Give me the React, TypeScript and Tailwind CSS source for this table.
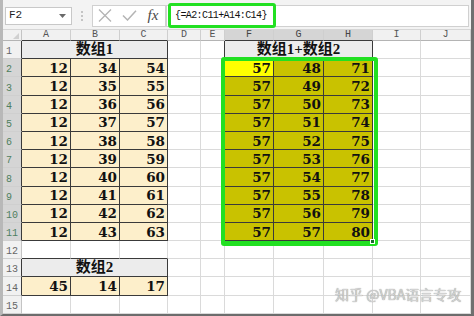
import React from 'react'

type Kind = 'empty' | 'title' | 'peach' | 'olive' | 'active'

const COLS = ['A', 'B', 'C', 'D', 'E', 'F', 'G', 'H', 'I', 'J']
const ROWS = Array.from({ length: 15 }, (_, i) => i + 1)

// merged cells: row -> start columns (each spans 3)
const merges: Record<number, number[]> = { 1: [0, 5], 13: [0] }

const inBlock = (r: number, c: number) =>
  (c >= 0 && c <= 2 && ((r >= 1 && r <= 11) || r === 13 || r === 14)) ||
  (c >= 5 && c <= 7 && r >= 1 && r <= 11)

function content(r: number, c: number): { kind: Kind; text?: string } {
  if (r === 1 && c === 0) return { kind: 'title', text: '数组1' }
  if (r === 1 && c === 5) return { kind: 'title', text: '数组1+数组2' }
  if (r === 13 && c === 0) return { kind: 'title', text: '数组2' }
  if (r >= 2 && r <= 11 && c <= 2) {
    const i = r - 2
    return { kind: 'peach', text: String([12, 34 + i, 54 + i][c]) }
  }
  if (r === 14 && c <= 2) return { kind: 'peach', text: String([45, 14, 17][c]) }
  if (r >= 2 && r <= 11 && c >= 5 && c <= 7) {
    const i = r - 2
    return { kind: r === 2 && c === 5 ? 'active' : 'olive', text: String([57, 48 + i, 71 + i][c - 5]) }
  }
  return { kind: 'empty' }
}

const kindClass: Record<Kind, string> = {
  empty: 'bg-white',
  title: "bg-[#ececec] justify-center font-bold text-[15px] text-[#111] font-['Liberation_Serif','Noto_Sans_CJK_SC',serif]",
  peach: "bg-[#fdefcb] justify-end items-end pr-[2px] pb-[1px] font-bold text-[13.5px] text-[#111] font-['DejaVu_Serif',serif]",
  olive: "bg-[#c9c200] justify-end items-end pr-[2px] pb-[1px] font-bold text-[13.5px] text-[#111] font-['DejaVu_Serif',serif]",
  active: "bg-[#ffff00] justify-end items-end pr-[2px] pb-[1px] font-bold text-[13.5px] text-[#111] font-['DejaVu_Serif',serif]",
}

function SheetRow({ r }: { r: number }) {
  const cells: React.ReactNode[] = []
  const rowSel = r >= 2 && r <= 11
  cells.push(
    <div
      key="h"
      className={
        'flex items-end pl-[3px] pb-[1px] border-b border-b-[#cfcfcf] border-r leading-none text-[10px] font-[\'Liberation_Mono\',monospace] ' +
        (inBlock(r, 0) ? 'border-r-[#3a3a3a] ' : 'border-r-[#c4c4c4] ') +
        (rowSel ? 'bg-[#d5d5d5] text-[#4f8060]' : 'bg-[#f1f1f1] text-[#666]')
      }
    >
      {r}
    </div>
  )
  let c = 0
  while (c < COLS.length) {
    const span = (merges[r] || []).includes(c) ? 3 : 1
    const last = c + span - 1
    const rDark = inBlock(r, last) || inBlock(r, last + 1)
    const bDark = inBlock(r, c) || inBlock(r + 1, c)
    const { kind, text } = content(r, c)
    cells.push(
      <div
        key={c}
        className={
          'flex items-center leading-none overflow-hidden border-r border-b ' +
          (span === 3 ? 'col-span-3 ' : '') +
          (rDark ? 'border-r-[#3a3a3a] ' : 'border-r-[#dadada] ') +
          (bDark ? 'border-b-[#3a3a3a] ' : 'border-b-[#dadada] ') +
          kindClass[kind]
        }
      >
        {text}
      </div>
    )
    c += span
  }
  return <>{cells}</>
}

export default function App() {
  return (
    <div className="relative w-[474px] h-[316px] overflow-hidden bg-white">
      <div className="w-full h-full flex flex-col border-l-[3px] border-l-[#b8b8b8] border-r-[3px] border-r-[#707070] border-b-[2px] border-b-[#6c6c6c]">
        {/* formula bar */}
        <div className="h-[30px] flex items-center pt-[2px] bg-[#f3f3f3] border-b border-b-[#d6d6d6]">
          <div className="ml-[2px] w-[67px] h-[18px] bg-white border border-[#c8c8c8] flex items-center justify-between pl-[3px] pr-[5px]">
            <span className="text-[11px] text-[#222] font-['Liberation_Mono',monospace]">F2</span>
            <svg width="7" height="4" viewBox="0 0 7 4">
              <path d="M0 0h7L3.5 4z" fill="#6a6a6a" />
            </svg>
          </div>
          <div className="w-[20px] flex justify-center">
            <div className="flex flex-col gap-[2px]">
              <span className="w-[2px] h-[2px] bg-[#c4c4c4]" />
              <span className="w-[2px] h-[2px] bg-[#c4c4c4]" />
              <span className="w-[2px] h-[2px] bg-[#c4c4c4]" />
            </div>
          </div>
          <div className="w-[74px] h-[22px] bg-white border border-[#d0d0d0] flex items-center">
            <div className="w-[24px] flex justify-center">
              <svg width="14" height="13" viewBox="0 0 14 13">
                <path d="M1 0.5L13 12.5M13 0.5L1 12.5" stroke="#b4b4b4" strokeWidth="1.3" />
              </svg>
            </div>
            <div className="w-[24px] flex justify-center">
              <svg width="15" height="11" viewBox="0 0 15 11">
                <path d="M1 5.5L5.5 10L14 0.8" stroke="#b4b4b4" strokeWidth="1.5" fill="none" />
              </svg>
            </div>
            <div className="w-[24px] flex justify-center">
              <span className="italic text-[15px] leading-none text-[#4a4a4a] font-['Liberation_Serif',serif]">fx</span>
            </div>
          </div>
          <div className="flex-1 mr-[2px] h-[22px] bg-white border border-[#d0d0d0] flex items-center pl-[8px]">
            <span className="text-[10px] tracking-[-0.6px] text-[#111] font-['Liberation_Mono',monospace]">{'{=A2:C11+A14:C14}'}</span>
          </div>
        </div>

        {/* sheet */}
        <div className="grid grid-cols-[19px_49px_49px_48px_33px_24px_49px_50px_49px_48px_50px] grid-rows-[11px_repeat(15,18.2px)]">
          <div className="relative bg-[#f1f1f1] border-r border-r-[#c4c4c4] border-b border-b-[#b4b4b4]">
            <svg className="absolute right-[2px] bottom-[1px]" width="6" height="6" viewBox="0 0 6 6">
              <path d="M6 0V6H0z" fill="#d0d0d0" />
            </svg>
          </div>
          {COLS.map((name, c) => (
            <div
              key={name}
              className={
                "flex items-center justify-center leading-none text-[10px] font-['Liberation_Mono',monospace] border-r border-r-[#cfcfcf] border-b " +
                (inBlock(1, c) ? 'border-b-[#3a3a3a] ' : 'border-b-[#b4b4b4] ') +
                (c >= 5 && c <= 7 ? 'bg-[#d5d5d5] text-[#444]' : 'bg-[#f1f1f1] text-[#555]')
              }
            >
              {name}
            </div>
          ))}
          {ROWS.map(r => (
            <SheetRow key={r} r={r} />
          ))}
        </div>
      </div>

      {/* highlight around the formula */}
      <div className="absolute left-[168px] top-[3px] w-[108px] h-[25px] border-[3px] border-[#22e022] rounded-[3px]" />

      {/* selection outline F2:H11 */}
      <div className="absolute left-[221px] top-[57px] w-[157px] h-[189px] border-[4px] border-b-[5px] border-[#22e022] rounded-[3px]" />
      <div className="absolute left-[370px] top-[239px] w-[5px] h-[5px] bg-[#1d6b2c] border border-white" />

      {/* watermark */}
      <div className="absolute left-[335px] top-[287px] text-[14px] leading-none text-[#d2d2d2] [text-shadow:0_0_1px_#7a7a7a] font-['Noto_Sans_CJK_SC',sans-serif]">
        知乎 @VBA语言专攻
      </div>
    </div>
  )
}
